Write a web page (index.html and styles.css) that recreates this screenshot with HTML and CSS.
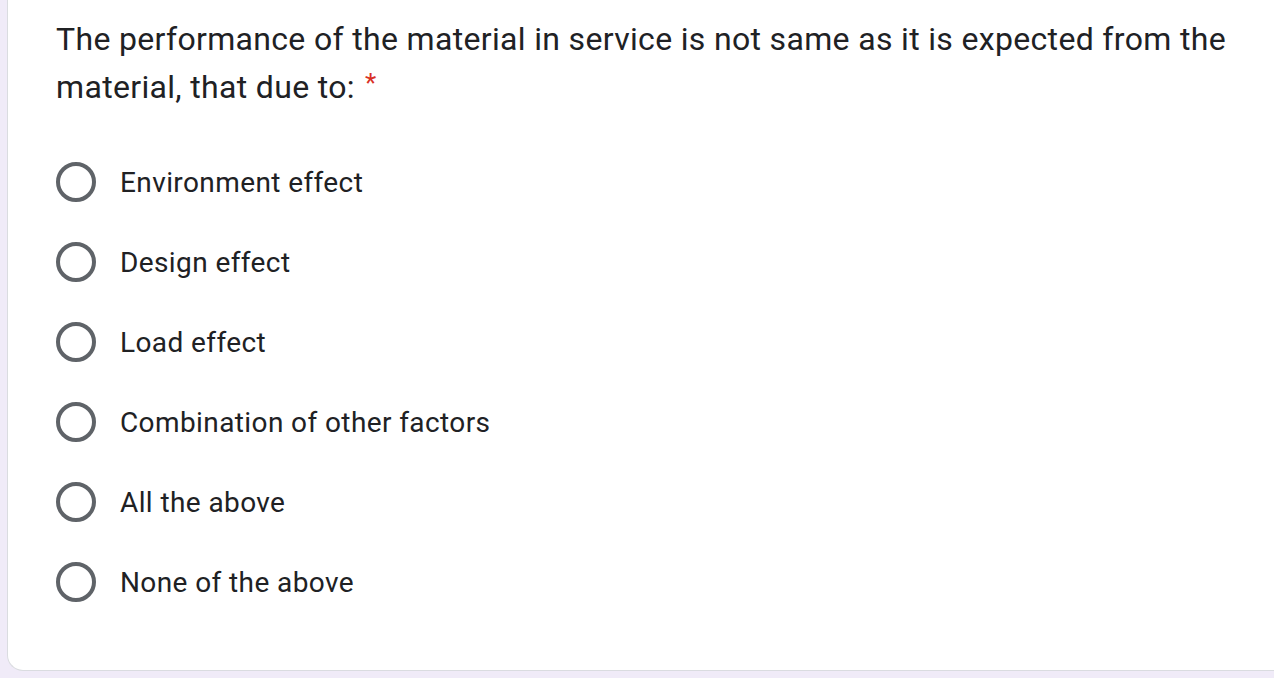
FILE: index.html
```html
<!DOCTYPE html>
<html>
<head>
<meta charset="utf-8">
<link rel="stylesheet" href="styles.css">
</head>
<body>
<div class="page">
  <div class="card">
    <div class="title">The performance of the material in service is not same as it is expected from the material, that due to:<span class="req">*</span></div>
    <div class="options">
      <div class="opt"><span class="radio"></span><span class="label">Environment effect</span></div>
      <div class="opt"><span class="radio"></span><span class="label">Design effect</span></div>
      <div class="opt"><span class="radio"></span><span class="label">Load effect</span></div>
      <div class="opt"><span class="radio"></span><span class="label">Combination of other factors</span></div>
      <div class="opt"><span class="radio"></span><span class="label">All the above</span></div>
      <div class="opt"><span class="radio"></span><span class="label">None of the above</span></div>
    </div>
  </div>
</div>
</body>
</html>
```

FILE: styles.css
```css
html, body {
  margin: 0;
  padding: 0;
  background: #f0ebf8;
  overflow: hidden;
  height: 678px;
}
.page {
  padding-left: 7px;
  height: 678px;
}
.card {
  background: #fff;
  border: 1px solid #dadce0;
  border-top: none;
  border-right: none;
  border-radius: 0 0 0 16px;
  height: 671px;
  box-sizing: border-box;
  padding: 15px 0 0 48px;
}
.title {
  font-family: Roboto, "Noto Sans", sans-serif;
  font-size: 32px;
  line-height: 48px;
  color: #202124;
  letter-spacing: 0.33px;
  width: 1200px;
}
.title-line2 {
  display: inline;
}
.req {
  display: inline-block;
  color: #d93025;
  font-size: 26px;
  line-height: 26px;
  margin-left: 10px;
  vertical-align: 6px;
}
.options {
  margin-top: 31px;
  display: flex;
  flex-direction: column;
}
.opt {
  display: flex;
  align-items: center;
  height: 80px;
}
.radio {
  width: 40px;
  height: 40px;
  box-sizing: border-box;
  border: 4px solid #5f6368;
  border-radius: 50%;
  flex: none;
}
.label {
  margin-left: 24px;
  font-family: Roboto, "Noto Sans", sans-serif;
  font-size: 28px;
  letter-spacing: 0.4px;
  color: #202124;
}
```
